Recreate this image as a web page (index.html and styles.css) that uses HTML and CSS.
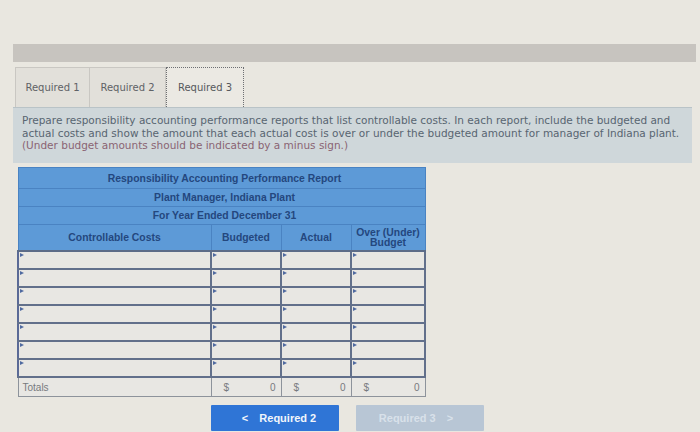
FILE: index.html
```html
<!DOCTYPE html>
<html>
<head>
<meta charset="utf-8">
<link rel="stylesheet" href="styles.css">
</head>
<body>
<div class="page">
  <div class="topbar"></div>
  <div class="tabs">
    <div class="tab t1">Required 1</div>
    <div class="tab t2">Required 2</div>
    <div class="tab t3 active">Required 3</div>
  </div>
  <div class="instr">
    <p>Prepare responsibility accounting performance reports that list controllable costs. In each report, include the budgeted and actual costs and show the amount that each actual cost is over or under the budgeted amount for manager of Indiana plant.</p>
    <p class="note">(Under budget amounts should be indicated by a minus sign.)</p>
  </div>
  <table class="report">
    <colgroup>
      <col class="c-label"><col class="c-num"><col class="c-num"><col class="c-over">
    </colgroup>
    <thead>
      <tr class="title r1"><th colspan="4">Responsibility Accounting Performance Report</th></tr>
      <tr class="title"><th colspan="4">Plant Manager, Indiana Plant</th></tr>
      <tr class="title"><th colspan="4">For Year Ended December 31</th></tr>
      <tr class="cols">
        <th>Controllable Costs</th>
        <th>Budgeted</th>
        <th>Actual</th>
        <th class="over">Over (Under)<br>Budget</th>
      </tr>
    </thead>
    <tbody>
      <tr class="inp"><td></td><td></td><td></td><td></td></tr>
      <tr class="inp"><td></td><td></td><td></td><td></td></tr>
      <tr class="inp"><td></td><td></td><td></td><td></td></tr>
      <tr class="inp"><td></td><td></td><td></td><td></td></tr>
      <tr class="inp"><td></td><td></td><td></td><td></td></tr>
      <tr class="inp"><td></td><td></td><td></td><td></td></tr>
      <tr class="inp"><td></td><td></td><td></td><td></td></tr>
      <tr class="totals">
        <td class="tl">Totals</td>
        <td><div class="amt"><span>$</span><span>0</span></div></td>
        <td><div class="amt"><span>$</span><span>0</span></div></td>
        <td><div class="amt"><span>$</span><span>0</span></div></td>
      </tr>
    </tbody>
  </table>
  <div class="nav">
    <button class="btn prev"><span class="chev">&lt;</span> Required 2</button>
    <button class="btn next">Required 3 <span class="chev">&gt;</span></button>
  </div>
</div>
</body>
</html>
```

FILE: styles.css
```css
html, body {
  margin: 0;
  padding: 0;
}
body {
  background: #e9e7e0;
  width: 700px;
  height: 432px;
  overflow: hidden;
  font-family: "DejaVu Sans", Verdana, sans-serif;
}
.page {
  padding-top: 44px;
}
.topbar {
  height: 18px;
  margin: 0 4px 0 13px;
  background: #c7c4bf;
}
.tabs {
  display: flex;
  margin: 5px 0 0 15px;
  height: 40px;
}
.tab {
  box-sizing: border-box;
  height: 40px;
  display: flex;
  align-items: center;
  justify-content: center;
  font-size: 10px;
  color: #5f6266;
  background: #e2e0da;
  border: 1px solid #c9c7c2;
  border-bottom: none;
}
.t1 { width: 75px; }
.t2 { width: 76px; border-left: none; }
.t3 { width: 78px; }
.tab.active {
  background: #ebe9e3;
  border: 1px dotted #6d6f72;
  border-bottom: none;
  color: #55585c;
}
.instr {
  box-sizing: border-box;
  margin: 0 8px 0 13px;
  height: 56px;
  background: #cfd7da;
  border-top: 1px solid #b9c3c7;
  padding: 6px 9px 0 9px;
  font-size: 10.5px;
  line-height: 12.5px;
  color: #586571;
}
.instr p {
  margin: 0;
}
.instr .note {
  color: #8a6473;
}
.report {
  margin: 4px 0 0 17px;
  border-collapse: collapse;
  table-layout: fixed;
  width: 407px;
  font-family: "Liberation Sans", Arial, sans-serif;
}
.c-label { width: 193px; }
.c-num { width: 70px; }
.c-over { width: 74px; }
.report th {
  background: #5d9ad7;
  color: #24477e;
  font-weight: bold;
  font-size: 10.4px;
  padding: 0;
  border: 1px solid #4a83c2;
}
.title th {
  height: 17px;
  text-align: center;
  padding-left: 6px;
}
.title.r1 th {
  height: 20px;
}
.cols th {
  height: 25px;
  border-bottom: 2px solid #5c6c88;
}
.cols th.over {
  line-height: 10px;
}
.inp td {
  height: 16px;
  padding: 0;
  border: 2px solid #62708b;
  border-top: none;
  position: relative;
  background: #e8e7e3;
}
.inp td:nth-child(n+2) {
  border-left-color: #4b69a7;
}
.inp td:first-child {
  border-left-color: #5a6a96;
}
.inp td::before {
  content: "";
  position: absolute;
  left: 1px;
  top: 1px;
  border-left: 4px solid #4f6aa0;
  border-top: 2px solid transparent;
  border-bottom: 2px solid transparent;
}
.totals td {
  height: 18px;
  padding: 0 3px;
  border: 1px solid #8d939b;
  font-size: 10px;
  color: #777a7e;
  background: #e8e7e3;
}
.totals td.tl {
  padding-left: 4px;
}
.amt {
  display: flex;
  justify-content: space-between;
  padding-left: 9px;
  padding-right: 2px;
}
.nav {
  display: flex;
  gap: 17px;
  margin: 8px 0 0 211px;
}
.btn {
  width: 128px;
  height: 26px;
  border: none;
  border-radius: 1px;
  font-family: "Liberation Sans", Arial, sans-serif;
  font-weight: bold;
  font-size: 11px;
  color: #fff;
  padding: 0;
}
.btn.prev {
  background: #2f75d6;
  color: #f2f6fb;
}
.btn.next {
  background: #b8c6d5;
  color: #d8e1ea;
}
.chev {
  display: inline-block;
  margin: 0 8px;
}
```
